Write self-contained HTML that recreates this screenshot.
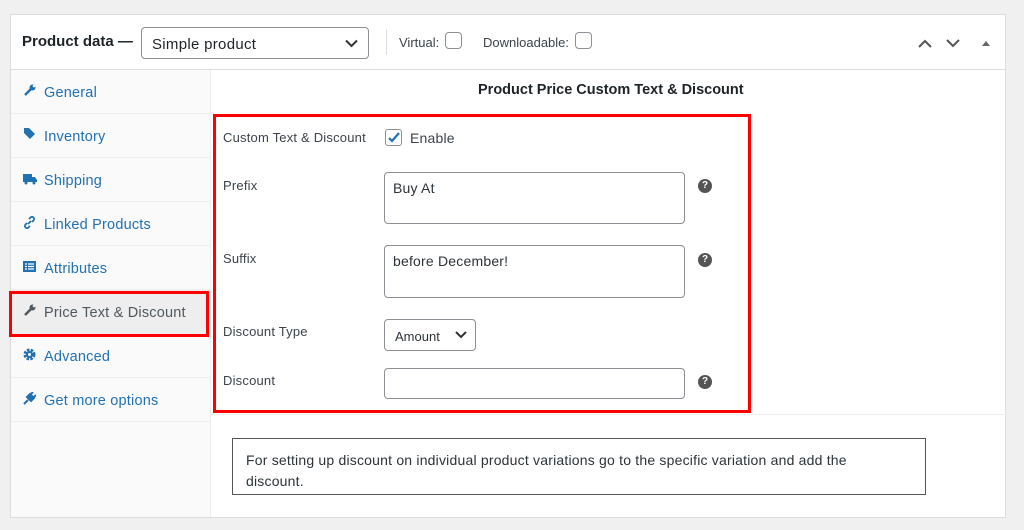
<!DOCTYPE html><html><head><style>
body{margin:0;width:1024px;height:530px;background:#f0f0f1;font-family:"Liberation Sans",sans-serif;position:relative;overflow:hidden}
.a{position:absolute}
.panel{left:10px;top:14px;width:996px;height:504px;background:#fff;border:1px solid #dcdcde;box-sizing:border-box}
.side{left:11px;top:70px;width:199px;height:447px;background:#fafafa;border-right:1px solid #eee}
.it{position:absolute;left:0;width:199px;height:44px;border-bottom:1px solid #eee;color:#2271b1;font-size:14.5px;box-sizing:border-box;padding:15px 0 0 33px;letter-spacing:.2px}
.ic{position:absolute;left:12px;top:14px}
.lbl{font-size:13px;color:#3c434a;letter-spacing:.2px}
.inp{border:1px solid #8c8f94;border-radius:4px;background:#fff;box-sizing:border-box}
.q{width:14px;height:14px;border-radius:50%;background:#555;color:#fff;font-size:10px;font-weight:bold;text-align:center;line-height:14px}
.red{border:3px solid #f00;box-sizing:border-box}
</style></head><body>
<div class="a panel"></div>
<div class="a" style="left:11px;top:69px;width:995px;height:1px;background:#dcdcde"></div>
<div class="a" style="left:22px;top:33px;font-size:15px;font-weight:bold;color:#1d2327">Product data —</div>
<div class="a inp" style="left:141px;top:27px;width:228px;height:32px;padding:8px 0 0 10px;font-size:15px;color:#1d2327;letter-spacing:.3px">Simple product
<svg class="a" style="right:10px;top:11px" width="13" height="9" viewBox="0 0 13 9"><path d="M1 1.5l5.5 5.5 5.5-5.5" fill="none" stroke="#333" stroke-width="2"/></svg></div>
<div class="a" style="left:386px;top:30px;width:1px;height:25px;background:#ddd"></div>
<div class="a" style="left:399px;top:35px;font-size:13px;color:#3c434a">Virtual:</div>
<div class="a inp" style="left:445px;top:32px;width:17px;height:17px"></div>
<div class="a" style="left:483px;top:35px;font-size:13px;color:#3c434a">Downloadable:</div>
<div class="a inp" style="left:575px;top:32px;width:17px;height:17px"></div>
<svg class="a" style="left:917px;top:37px" width="80" height="12" viewBox="0 0 80 12"><path d="M2 10l6-6 6 6M30 3l6 6 6-6" fill="none" stroke="#555" stroke-width="2"/><path d="M65 9l4-5 4 5z" fill="#666"/></svg>
<div class="a side">
<div class="it" style="top:0"><svg class="ic" width="13" height="13" viewBox="0 0 13 13"><path d="M2 11l6-6" stroke="#2271b1" stroke-width="2.5"/><circle cx="9.5" cy="3.5" r="3" fill="#2271b1"/><circle cx="11" cy="2" r="1.3" fill="#fafafa"/></svg>General</div>
<div class="it" style="top:44px"><svg class="ic" width="13" height="13" viewBox="0 0 13 13"><path d="M6 0l6 6-5 5-6-6V0z" fill="#2271b1"/></svg>Inventory</div>
<div class="it" style="top:88px"><svg class="ic" width="15" height="13" viewBox="0 0 15 13"><path d="M0 2h9v8H0zM9 5h3l2 3v2H9z" fill="#2271b1"/><circle cx="3" cy="11" r="1.5" fill="#2271b1"/><circle cx="11" cy="11" r="1.5" fill="#2271b1"/></svg>Shipping</div>
<div class="it" style="top:132px"><svg class="ic" width="13" height="13" viewBox="0 0 13 13"><path d="M5 8l3-3M6 3l1.5-1.5a2 2 0 013 3L9 6M7 10l-1.5 1.5a2 2 0 01-3-3L4 7" fill="none" stroke="#2271b1" stroke-width="1.8"/></svg>Linked Products</div>
<div class="it" style="top:176px"><svg class="ic" width="13" height="13" viewBox="0 0 13 13"><rect x="0" y="1" width="13" height="11" fill="#2271b1"/><path d="M2 4h2M5 4h6M2 6.5h2M5 6.5h6M2 9h2M5 9h6" stroke="#fff" stroke-width="1.2"/></svg>Attributes</div>
<div class="it" style="top:220px;background:#eee;color:#50575e"><svg class="ic" width="13" height="13" viewBox="0 0 13 13"><path d="M2 11l6-6" stroke="#50575e" stroke-width="2.5"/><circle cx="9.5" cy="3.5" r="3" fill="#50575e"/><circle cx="11" cy="2" r="1.3" fill="#eee"/></svg>Price Text &amp; Discount</div>
<div class="it" style="top:264px"><svg class="ic" width="13" height="13" viewBox="0 0 13 13"><circle cx="6.5" cy="6.5" r="4.5" fill="none" stroke="#2271b1" stroke-width="3" stroke-dasharray="2.5 1.2"/><circle cx="6.5" cy="6.5" r="3.5" fill="#2271b1"/><circle cx="6.5" cy="6.5" r="1.5" fill="#fafafa"/></svg>Advanced</div>
<div class="it" style="top:308px"><svg class="ic" width="13" height="13" viewBox="0 0 13 13"><path d="M1 12l4-4M4 5l4 4 3-3-4-4zM8 2l2-2M11 5l2-2" stroke="#2271b1" stroke-width="2" fill="#2271b1"/></svg>Get more options</div>
</div>
<div class="a red" style="left:9px;top:291px;width:200px;height:46px"></div>
<div class="a" style="left:478px;top:82px;font-size:14.5px;font-weight:bold;color:#1d2327">Product Price Custom Text &amp; Discount</div>
<div class="a red" style="left:213px;top:114px;width:538px;height:299px"></div>
<div class="a lbl" style="left:223px;top:130px">Custom Text &amp; Discount</div>
<div class="a inp" style="left:385px;top:129px;width:17px;height:17px;border-radius:3px"><svg width="15" height="15" viewBox="0 0 15 15"><path d="M3 8l3 3 7-8" fill="none" stroke="#2271b1" stroke-width="2.2"/></svg></div>
<div class="a" style="left:410px;top:130px;font-size:14px;color:#3c434a;letter-spacing:.2px">Enable</div>
<div class="a lbl" style="left:223px;top:178px">Prefix</div>
<div class="a inp" style="left:384px;top:172px;width:301px;height:52px;padding:7px 8px;font-size:14px;color:#2c3338;letter-spacing:.2px">Buy At</div>
<div class="a q" style="left:698px;top:179px">?</div>
<div class="a lbl" style="left:223px;top:251px">Suffix</div>
<div class="a inp" style="left:384px;top:245px;width:301px;height:53px;padding:7px 8px;font-size:14px;color:#2c3338;letter-spacing:.2px">before December!</div>
<div class="a q" style="left:698px;top:253px">?</div>
<div class="a lbl" style="left:223px;top:324px">Discount Type</div>
<div class="a inp" style="left:384px;top:319px;width:92px;height:32px;padding:9px 10px;font-size:13px;color:#2c3338">Amount
<svg class="a" style="right:8px;top:11px" width="12" height="8" viewBox="0 0 12 8"><path d="M1 1l5 5 5-5" fill="none" stroke="#333" stroke-width="2"/></svg></div>
<div class="a lbl" style="left:223px;top:373px">Discount</div>
<div class="a inp" style="left:384px;top:368px;width:301px;height:31px"></div>
<div class="a q" style="left:698px;top:375px">?</div>
<div class="a" style="left:210px;top:414px;width:796px;height:1px;background:#eee"></div>
<div class="a" style="left:232px;top:438px;width:694px;height:57px;border:1px solid #555;box-sizing:border-box;padding:11px 40px 0 13px;font-size:14px;line-height:21px;color:#2c3338;letter-spacing:.2px">For setting up discount on individual product variations go to the specific variation and add the discount.</div>
</body></html>
